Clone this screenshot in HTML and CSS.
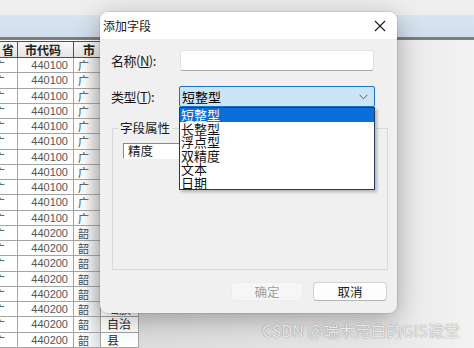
FILE: index.html
```html
<!DOCTYPE html>
<html>
<head>
  <link rel="stylesheet" href="styles.css">
</head>
<body>
  <div class="screen">
    <div class="topbar"></div>
    <div class="ribbon"></div>
    <div class="rule"></div>
    <div class="workspace">
      <div class="sheet">
        <div class="row head">
          <div class="c c1">省</div>
          <div class="c c2">市代码</div>
          <div class="c c3">市</div>
          <div class="c c4">区县</div>
        </div>
        <div class="row"><div class="c c1">广</div><div class="c c2">440100</div><div class="c c3">广</div><div class="c c4">荔湾</div></div>
        <div class="row"><div class="c c1">广</div><div class="c c2">440100</div><div class="c c3">广</div><div class="c c4">越秀</div></div>
        <div class="row"><div class="c c1">广</div><div class="c c2">440100</div><div class="c c3">广</div><div class="c c4">海珠</div></div>
        <div class="row"><div class="c c1">广</div><div class="c c2">440100</div><div class="c c3">广</div><div class="c c4">天河</div></div>
        <div class="row"><div class="c c1">广</div><div class="c c2">440100</div><div class="c c3">广</div><div class="c c4">白云</div></div>
        <div class="row"><div class="c c1">广</div><div class="c c2">440100</div><div class="c c3">广</div><div class="c c4">黄埔</div></div>
        <div class="row"><div class="c c1">广</div><div class="c c2">440100</div><div class="c c3">广</div><div class="c c4">番禺</div></div>
        <div class="row"><div class="c c1">广</div><div class="c c2">440100</div><div class="c c3">广</div><div class="c c4">花都</div></div>
        <div class="row"><div class="c c1">广</div><div class="c c2">440100</div><div class="c c3">广</div><div class="c c4">南沙</div></div>
        <div class="row"><div class="c c1">广</div><div class="c c2">440100</div><div class="c c3">广</div><div class="c c4">从化</div></div>
        <div class="row"><div class="c c1">广</div><div class="c c2">440100</div><div class="c c3">广</div><div class="c c4">增城</div></div>
        <div class="row"><div class="c c1">广</div><div class="c c2">440200</div><div class="c c3">韶</div><div class="c c4">武江</div></div>
        <div class="row"><div class="c c1">广</div><div class="c c2">440200</div><div class="c c3">韶</div><div class="c c4">浈江</div></div>
        <div class="row"><div class="c c1">广</div><div class="c c2">440200</div><div class="c c3">韶</div><div class="c c4">曲江</div></div>
        <div class="row"><div class="c c1">广</div><div class="c c2">440200</div><div class="c c3">韶</div><div class="c c4">始兴</div></div>
        <div class="row"><div class="c c1">广</div><div class="c c2">440200</div><div class="c c3">韶</div><div class="c c4">仁化</div></div>
        <div class="row"><div class="c c1">广</div><div class="c c2">440200</div><div class="c c3">韶</div><div class="c c4">瑶族</div></div>
        <div class="row"><div class="c c1">广</div><div class="c c2">440200</div><div class="c c3">韶</div><div class="c c4">自治</div></div>
        <div class="row"><div class="c c1">广</div><div class="c c2">440200</div><div class="c c3">韶</div><div class="c c4">县</div></div>
      </div>
      <div class="backdrop"></div>
    </div>

    <div class="dialog">
      <div class="titlebar">
        <span class="title">添加字段</span>
        <svg class="close" width="12" height="12" viewBox="0 0 12 12">
          <path d="M1 1 L11 11 M11 1 L1 11" stroke="#1b1b1b" stroke-width="1.1" fill="none"/>
        </svg>
      </div>
      <div class="dialog-body">
        <div class="field name-field">
          <span class="label">名称(<u>N</u>):</span>
          <div class="textbox"></div>
        </div>
        <div class="field type-field">
          <span class="label">类型(<u>T</u>):</span>
          <div class="combo">
            <span class="combo-value">短整型</span>
            <svg class="chevron" width="9" height="6" viewBox="0 0 9 6">
              <path d="M0.5 0.8 L4.5 4.8 L8.5 0.8" stroke="#606060" stroke-width="1" fill="none"/>
            </svg>
            <ul class="droplist">
              <li class="selected">短整型</li>
              <li>长整型</li>
              <li>浮点型</li>
              <li>双精度</li>
              <li>文本</li>
              <li>日期</li>
            </ul>
          </div>
        </div>
        <fieldset class="group">
          <legend>字段属性</legend>
          <div class="prop-box">精度</div>
        </fieldset>
        <div class="buttons">
          <div class="btn disabled">确定</div>
          <div class="btn">取消</div>
        </div>
      </div>
    </div>

    <div class="watermark">CSDN @端木宛白的GIS课堂</div>
  </div>
</body>
</html>
```

FILE: styles.css
```css
body {
  margin: 0;
  font-family: "Noto Sans CJK SC", "Liberation Sans", sans-serif;
}

.screen {
  position: relative;
  width: 474px;
  height: 348px;
  overflow: hidden;
  background: #e6e6e6;
}

.topbar {
  height: 15px;
  background: #eeeeee;
}

.ribbon {
  height: 22px;
  background: linear-gradient(#d9e4ef, #d1deeb);
}

.rule {
  height: 3px;
  background: #7c7c7c;
}

.workspace {
  display: flex;
  height: 308px;
}

/* attribute table behind the dialog */
.sheet {
  margin-left: -8px;
  padding-top: 1px;
  background: #ffffff;
}

.row {
  display: flex;
  height: 15.26px;
  box-sizing: border-box;
  border-bottom: 1px solid #a4a4a4;
}

.c {
  box-sizing: border-box;
  border-right: 1px solid #a4a4a4;
  font-size: 11px;
  line-height: 14px;
  color: #4a4a4a;
  white-space: nowrap;
  overflow: hidden;
}

.c1 { width: 26px; padding-left: 2px; }
.c2 { width: 56px; text-align: right; padding-right: 5px; font-family: "Liberation Sans", sans-serif; color: #555; }
.c3 { width: 27px; padding-left: 4px; background: linear-gradient(to right, #ffffff 40%, #dcdcdc); }
.c4 { width: 38px; padding-left: 6px; font-size: 12px; color: #2a2a2a; }

.row.head {
  height: 17px;
  border-top: 1px solid #505050;
  border-bottom: 1px solid #505050;
  background: linear-gradient(#f8f8f8, #e4e4e4);
}

.head .c {
  border-right-color: #505050;
  font-weight: bold;
  font-size: 12px;
  line-height: 15px;
  color: #222;
  text-align: center;
  background: none;
  font-family: "Noto Sans CJK SC", sans-serif;
}

.head .c1 { text-align: right; padding-right: 3px; }

.backdrop {
  flex: 1;
  background: linear-gradient(to right, #dcdcdc, #e6e6e6 70%, #f3f3f3);
}

/* dialog */
.dialog {
  position: absolute;
  left: 100px;
  top: 12px;
  width: 297px;
  height: 301px;
  border-radius: 8px;
  background: #f0f0f0;
  box-shadow: 0 6px 26px rgba(0, 0, 0, 0.3), 0 0 0 1px rgba(0, 0, 0, 0.08);
}

.titlebar {
  display: flex;
  align-items: center;
  justify-content: space-between;
  height: 27px;
  padding: 0 11px 0 3px;
  background: #ffffff;
  border-radius: 8px 8px 0 0;
}

.title {
  font-size: 12px;
  color: #1a1a1a;
}

.dialog-body {
  padding: 0 22px 0 11px;
}

.field {
  display: flex;
  align-items: center;
  height: 21px;
  font-size: 13px;
  color: #1a1a1a;
}

.name-field { margin-top: 11px; }
.type-field { margin-top: 15px; }

.label {
  width: 69px;
  letter-spacing: -0.5px;
}

.textbox {
  width: 194px;
  height: 21px;
  box-sizing: border-box;
  background: #ffffff;
  border: 1px solid #e2e2e2;
  border-bottom-color: #a8a8a8;
  border-radius: 3px;
}

.combo {
  position: relative;
  display: flex;
  align-items: center;
  justify-content: space-between;
  margin-left: -1px;
  width: 196px;
  height: 21px;
  box-sizing: border-box;
  padding: 0 6px 0 2px;
  background: #cce4f7;
  border: 1px solid #1a74c8;
  border-radius: 2px;
}

.combo-value {
  font-size: 13px;
  color: #000;
}

.droplist {
  position: absolute;
  left: -1px;
  top: 20px;
  width: 196px;
  margin: 0;
  padding: 0;
  list-style: none;
  box-sizing: border-box;
  border: 1px solid #1d3f66;
  background: #ffffff;
  box-shadow: 2px 2px 3px rgba(0, 0, 0, 0.25);
  z-index: 2;
}

.droplist li {
  height: 13.5px;
  padding-left: 1px;
  font-size: 13px;
  line-height: 13px;
  color: #111;
}

.droplist li.selected {
  background: #0a6fd6;
  color: #ffffff;
}

.group {
  margin: 13px 0 0 1px;
  padding: 0 0 0 5px;
  width: 276px;
  height: 150px;
  box-sizing: border-box;
  border: 1px solid #d8d8d8;
}

.group legend {
  padding: 0 2px;
  font-size: 12.5px;
  line-height: 16px;
  color: #1a1a1a;
}

.prop-box {
  margin: 7px 0 0 5px;
  width: 80px;
  height: 16px;
  box-sizing: border-box;
  padding-left: 4px;
  font-size: 12.5px;
  line-height: 14px;
  color: #1a1a1a;
  background: #ffffff;
  border: 1px solid #ffffff;
  border-top-color: #8a8a8a;
  border-left-color: #8a8a8a;
}

.buttons {
  display: flex;
  justify-content: flex-end;
  gap: 10px;
  margin: 12px -12px 0 0;
}

.btn {
  width: 74px;
  height: 19px;
  box-sizing: border-box;
  font-size: 12.5px;
  line-height: 17px;
  text-align: center;
  color: #1a1a1a;
  background: #fdfdfd;
  border: 1px solid #d2d2d2;
  border-bottom-color: #b5b5b5;
  border-radius: 4px;
}

.btn.disabled {
  width: 72px;
  color: #a0a0a0;
  background: #f6f6f6;
  border-color: #ececec;
}

.watermark {
  position: absolute;
  left: 262px;
  top: 320px;
  font-size: 16px;
  line-height: 20px;
  color: #e8e8e8;
  text-shadow: 0 0 1px rgba(0, 0, 0, 0.35), 0 0 2px rgba(0, 0, 0, 0.12);
  white-space: nowrap;
}
```
